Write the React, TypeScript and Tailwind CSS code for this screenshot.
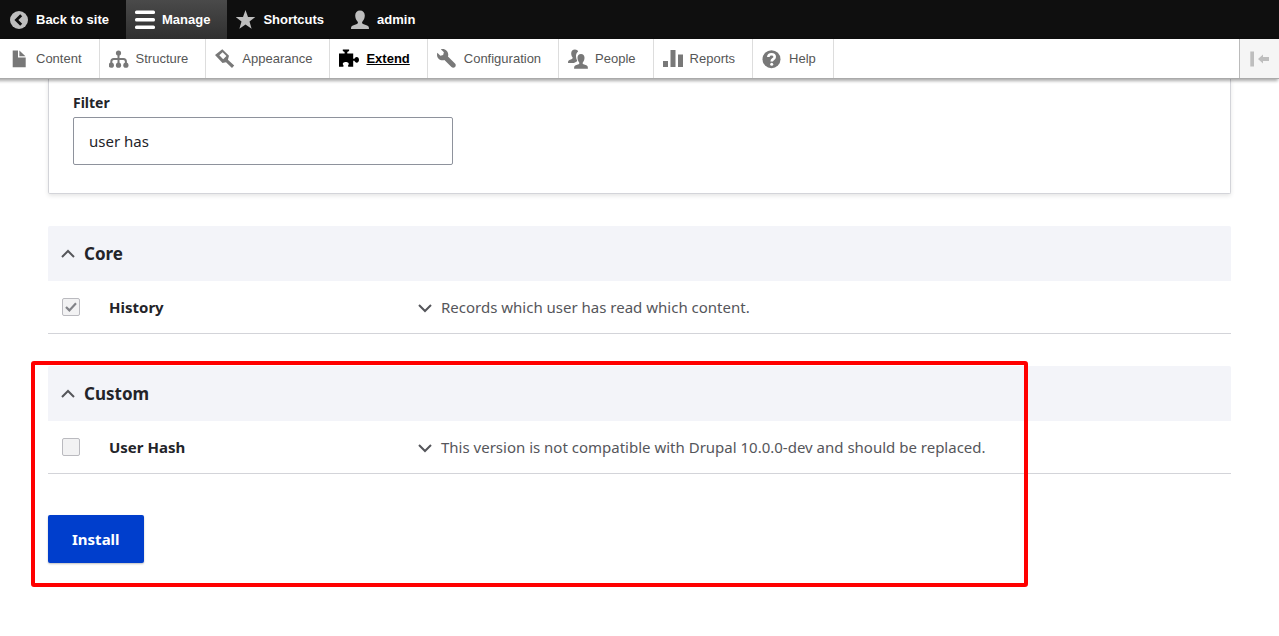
import React, { useState } from 'react';

const Icon = ({ children }: { children: React.ReactNode }) => (
  <svg className="h-5 w-5 shrink-0" viewBox="0 0 20 20" fill="currentColor" aria-hidden="true">
    {children}
  </svg>
);

const BackIcon = () => (
  <Icon>
    <circle cx="10" cy="10" r="9" />
    <path d="M12.2 5.200 7.400 10l4.800 4.800" fill="none" stroke="#0f0f0f" strokeWidth="2.800" />
  </Icon>
);

const MenuIcon = () => (
  <Icon>
    <rect y=".5" width="20" height="3.500" rx="1.500" />
    <rect y="8" width="20" height="3.500" rx="1.500" />
    <rect y="15.500" width="20" height="3.500" rx="1.500" />
  </Icon>
);

const StarIcon = () => (
  <Icon>
    <path d="M9.500 0l2.500 6.900 7.300.2-5.800 4.500 2.100 7.200-6.100-4.200-6.100 4.200 2.100-7.200L-.3 7.100l7.300-.2z" />
  </Icon>
);

const PersonIcon = () => (
  <Icon>
    <path d="M10 .5c3 0 4.800 2 4.800 5 0 2.400-1 4.700-2.300 6-.8.9-.5 2 .6 2.500l4 1.500c1.300.5 1.900 1.300 1.900 3.500H1c0-2.200.6-3 1.900-3.500l4-1.500c1.100-.5 1.400-1.600.6-2.500-1.300-1.300-2.300-3.600-2.300-6 0-3 1.800-5 4.800-5z" />
  </Icon>
);

const FileIcon = () => (
  <Icon>
    <path d="M3.700 1.500H9v7h7.700v9.700h-13z" />
    <path d="M10.400 1.500l6 5.700h-6z" />
  </Icon>
);

const StructureIcon = () => (
  <Icon>
    <circle cx="9.500" cy="4" r="2.600" />
    <circle cx="2.300" cy="16.200" r="2.600" />
    <circle cx="9.500" cy="16.200" r="2.600" />
    <circle cx="16.900" cy="16.200" r="2.600" />
    <path d="M9.500 4v12M2.300 16v-3.500c0-1.500 1-2.500 2.500-2.500h9.600c1.500 0 2.500 1 2.500 2.500V16" fill="none" stroke="currentColor" strokeWidth="2" />
  </Icon>
);

const BrushIcon = () => (
  <Icon>
    <path
      fillRule="evenodd"
      d="M7.300.3L14 6.800 12.900 10.800l6.300 5.600-2.200 2.500-6-5.700-3.500.9L0 5.900zM7.600 3.300L4.300 6.300l3.900 4 3.200-3.200z"
    />
  </Icon>
);

const PuzzleIcon = () => (
  <Icon>
    <path d="M0 4.600h5.600V3.100L3.800 2V.4h6.300V2L8.300 3.100v1.500h5.900v5.200h1.200c.4-1.100 1.300-1.900 2.300-1.900 1.400 0 2.300 1.300 2.300 2.900s-.9 2.900-2.300 2.900c-1 0-1.900-.8-2.300-1.900h-1.200v5.900H9.300c-.4-.9-.3-1.300.2-1.900 1-1.500-.7-2.800-2.700-2.800s-3.700 1.300-2.700 2.800c.5.6.6 1 .2 1.900H0z" />
  </Icon>
);

const WrenchIcon = () => (
  <Icon>
    <path
      transform="scale(1.25)"
      d="M14.416 11.586l-.01-.008v-.001l-5.656-5.656c.15-.449.252-.921.252-1.421 0-2.485-2.016-4.5-4.502-4.5-.505 0-.981.102-1.434.255l2.431 2.431-.588 2.196-2.196.588-2.445-2.445c-.162.464-.268.956-.268 1.475 0 2.486 2.014 4.5 4.5 4.500.5 0 .972-.102 1.421-.251l5.667 5.665c.781.781 2.047.781 2.828 0s.781-2.047 0-2.828z"
    />
  </Icon>
);

const PeopleIcon = () => (
  <Icon>
    <path d="M7 .5c1.500 0 2.600.7 3.100 1.900-1.500 1.200-2.300 3-2.100 5.200.1 1.500.5 2.900 1.200 4.100-.4.900-1.900 1.500-3.300 2.400H0c0-1.900.3-2.700 1.500-3.200l2.400-.9c.9-.4 1-1.200.4-1.900C3.500 7 3.200 5.500 3.200 4.200 3.200 2 4.600.5 7 .5z" />
    <path d="M13 4.900c2.200 0 3.500 1.500 3.500 3.900 0 1.900-.6 3.400-1.500 4.500-.6.800-.4 1.600.5 2l2.800 1c1.200.5 1.600 1.200 1.600 3.400H6.100c0-2.200.4-2.900 1.600-3.400l2.800-1c.9-.4 1.100-1.200.5-2-.9-1.100-1.500-2.600-1.500-4.500 0-2.400 1.300-3.900 3.500-3.900z" />
  </Icon>
);

const ChartIcon = () => (
  <Icon>
    <path d="M0 12h5v6H0zM7.500 1h5v17h-5zM15 5.500h5V18h-5z" />
  </Icon>
);

const HelpIcon = () => (
  <Icon>
    <circle cx="9.500" cy="10.200" r="9" />
    <path d="M6.300 8C6.400 6.200 7.700 5.300 9.500 5.300c1.900 0 3.200 1 3.200 2.600 0 2.200-3 2.300-3 4.500" fill="none" stroke="#fff" strokeWidth="2.600" />
    <circle cx="9.700" cy="15.200" r="1.500" fill="#fff" />
  </Icon>
);

const Chevron = ({ up = false }: { up?: boolean }) => (
  <svg className="h-4 w-4 shrink-0" viewBox="0 0 16 16" fill="none" stroke="#55565b" strokeWidth="2" aria-hidden="true">
    <path d={up ? 'M2 11l6-6 6 6' : 'M2 6l6 6 6-6'} />
  </svg>
);

const tabs = [
  { label: 'Back to site', icon: BackIcon },
  { label: 'Manage', icon: MenuIcon, active: true },
  { label: 'Shortcuts', icon: StarIcon },
  { label: 'admin', icon: PersonIcon },
];

const links = [
  { label: 'Content', icon: FileIcon },
  { label: 'Structure', icon: StructureIcon },
  { label: 'Appearance', icon: BrushIcon },
  { label: 'Extend', icon: PuzzleIcon, active: true },
  { label: 'Configuration', icon: WrenchIcon },
  { label: 'People', icon: PeopleIcon },
  { label: 'Reports', icon: ChartIcon },
  { label: 'Help', icon: HelpIcon },
];

const Toolbar = () => (
  <header className="relative font-['Liberation_Sans',Arial,sans-serif] text-[13px]">
    <nav className="flex h-[39px] bg-[#0f0f0f] font-bold text-white">
      {tabs.map(({ label, icon: TabIcon, active }) => (
        <a
          key={label}
          href="#"
          className={`flex items-center gap-[7px] pr-[17px] pl-[9px] ${active ? 'bg-linear-to-b from-[#4a4a4a] to-[#303030]' : ''}`}
        >
          <span className={active ? 'text-white' : 'text-[#bebebe]'}>
            <TabIcon />
          </span>
          {label}
        </a>
      ))}
    </nav>
    <nav className="flex h-10 border-b border-[#aaa] bg-white text-[#565656] shadow-[-2px_1px_3px_1px_rgba(0,0,0,0.33)]">
      {links.map(({ label, icon: LinkIcon, active }) => (
        <a
          key={label}
          href="#"
          className={`flex items-center gap-[7px] border-r border-[#ddd] pr-[17px] pl-[9px] ${active ? 'font-bold text-black underline' : ''}`}
        >
          <span className={active ? 'text-black' : 'text-[#787878]'}>
            <LinkIcon />
          </span>
          {label}
        </a>
      ))}
      <button
        type="button"
        aria-label="Vertical orientation"
        className="ml-auto flex w-10 items-center justify-center border-l border-[#bbb] bg-[#f5f5f5] text-[#bebebe]"
      >
        <Icon>
          <path d="M.3 2.500h3.700v15H.3zM8 10l5-4.500V8h6v4h-6v2.500z" />
        </Icon>
      </button>
    </nav>
  </header>
);

interface ModuleGroupProps {
  title: string;
  name: string;
  description: string;
  checked?: boolean;
}

const ModuleGroup = ({ title, name, description, checked = false }: ModuleGroupProps) => {
  const id = `module-${title.toLowerCase()}`;

  return (
    <details open>
      <summary className="flex h-[55px] cursor-pointer list-none items-center gap-2 rounded-t-xs bg-[#f3f4f9] pl-3 text-[17px] font-bold">
        <Chevron up />
        {title}
      </summary>
      <div className="border-b border-[#d3d4d9]">
        <table className="w-full table-fixed">
          <tbody>
            <tr className="h-[52px]">
              <td className="w-[61px] pl-[14px]">
                <span className="grid h-[18px] w-[18px]">
                  <input
                    id={id}
                    type="checkbox"
                    defaultChecked={checked}
                    disabled
                    className="col-start-1 row-start-1 h-[18px] w-[18px] appearance-none rounded-xs border border-[#bababf] bg-[#f2f2f3]"
                  />
                  {checked && (
                    <svg className="pointer-events-none col-start-1 row-start-1 h-[18px] w-[18px]" viewBox="0 0 18 18" fill="none" stroke="#828388" strokeWidth="2.200" aria-hidden="true">
                      <path d="M4 9l3.400 3.400L14 5.300" />
                    </svg>
                  )}
                </span>
              </td>
              <td className="w-[308px] font-bold">
                <label htmlFor={id}>{name}</label>
              </td>
              <td>
                <details>
                  <summary className="flex cursor-pointer list-none items-center gap-2 text-[#55565b]">
                    <Chevron />
                    {description}
                  </summary>
                </details>
              </td>
            </tr>
          </tbody>
        </table>
      </div>
    </details>
  );
};

const App = () => {
  const [filter, setFilter] = useState('user has');

  return (
    <div className="min-h-screen bg-white font-['Noto_Sans',sans-serif] text-[15px] leading-6 text-[#232429]">
      <Toolbar />
      <main className="px-12">
        <section className="mb-8 rounded-b-xs border-x border-b border-[#d3d4d9] px-6 pt-[14px] pb-7 shadow-[0_2px_4px_rgba(0,0,0,0.1)]">
          <label htmlFor="filter" className="mb-1 block text-sm leading-5 font-bold">
            Filter
          </label>
          <input
            id="filter"
            type="text"
            value={filter}
            onChange={(e) => setFilter(e.target.value)}
            className="block h-12 w-full max-w-[380px] rounded-xs border border-[#8e929c] bg-white px-[15px]"
          />
        </section>

        <ModuleGroup title="Core" name="History" description="Records which user has read which content." checked />

        <div className="relative mt-8">
          <ModuleGroup
            title="Custom"
            name="User Hash"
            description="This version is not compatible with Drupal 10.0.0-dev and should be replaced."
          />
          <button
            type="button"
            className="mt-[41px] h-12 rounded-xs bg-[#003ecc] px-6 font-bold text-white shadow-[0_1px_2px_rgba(0,0,0,0.25)]"
          >
            Install
          </button>
          <div className="pointer-events-none absolute -top-[5px] -bottom-6 -left-[17px] w-[997px] rounded-[3px] border-4 border-[#ff0000]" />
        </div>
      </main>
    </div>
  );
};

export default App;
